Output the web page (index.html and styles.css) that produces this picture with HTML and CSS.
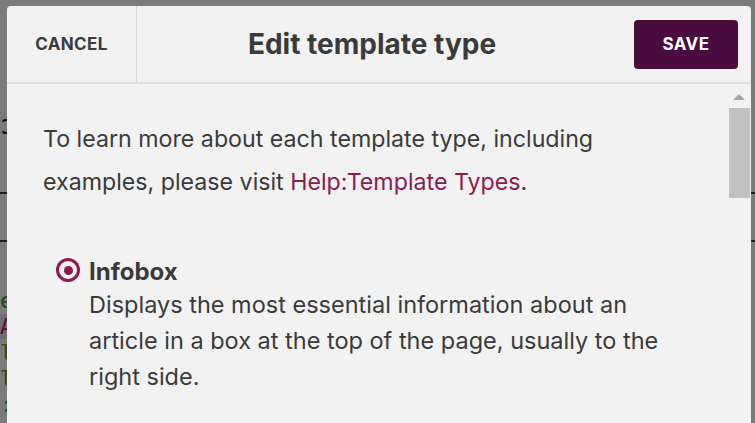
FILE: index.html
```html
<!DOCTYPE html>
<html lang="en">
<head>
  <meta charset="UTF-8">
  <meta name="viewport" content="width=device-width, initial-scale=1.0">
  <title>Edit template type</title>
  <link rel="stylesheet" href="styles.css">
</head>
<body>

  <!-- Page behind the dialog -->
  <div class="page">
    <div class="page-head">ɔ</div>
    <div class="page-rule"></div>
    <div class="page-rule"></div>
    <pre class="page-code"><span class="c-green">e:</span>
<span class="c-purple">AM</span>
<span class="c-olive">lt</span>
<span class="c-olive">le</span>
<span class="c-teal">: </span>
<span class="c-olive">nt</span></pre>
  </div>
  <div class="overlay"></div>

  <!-- Dialog -->
  <div class="modal">
    <div class="modal-header">
      <button class="btn-cancel">Cancel</button>
      <h1 class="modal-title">Edit template type</h1>
      <button class="btn-save">Save</button>
    </div>

    <div class="modal-body">
      <div class="modal-content">
        <p class="intro">To learn more about each template type, including examples, please visit <a href="#">Help:Template Types</a>.</p>

        <label class="option">
          <span class="radio checked"></span>
          <span class="option-text">
            <span class="option-name">Infobox</span>
            <span class="option-desc">Displays the most essential information about an article in a box at the top of the page, usually to the right side.</span>
          </span>
        </label>
      </div>

      <!-- Scrollbar -->
      <div class="scrollbar">
        <span class="scroll-up"></span>
        <span class="scroll-thumb"></span>
      </div>
    </div>
  </div>

</body>
</html>
```

FILE: styles.css
```css
body {
  margin: 0;
  font-family: Inter, "Noto Sans", sans-serif;
  background-color: #f4f4f4;
  overflow: hidden;
  height: 423px;
}
.page {
  padding-top: 110px;
  font-family: "DejaVu Sans Mono", monospace;
}
.page-head {
  font-size: 26px;
  color: #222;
  height: 82px;
}
.page-rule {
  border-top: 2px solid #444;
  height: 46px;
}
.page-code {
  margin: 0;
  font-size: 22px;
  line-height: 26px;
  font-family: "DejaVu Sans Mono", monospace;
}
.c-green { color: #2f8f2f; }
.c-purple { color: #b02060; background: #e8d8e8; }
.c-olive { color: #7a8a00; }
.c-teal { color: #2a8a9a; }
.overlay {
  position: fixed;
  top: 0;
  left: 0;
  width: 100%;
  height: 100%;
  background: rgba(0, 0, 0, 0.5);
}
.modal {
  position: fixed;
  top: 6px;
  left: 7px;
  right: 4px;
  bottom: -40px;
  background-color: #f2f2f2;
  border-radius: 4px 4px 0 0;
  display: flex;
  flex-direction: column;
  color: #3a3a3a;
}
.modal-header {
  display: flex;
  align-items: center;
  height: 76px;
  border-bottom: 2px solid #dcdcdc;
}
.btn-cancel {
  height: 100%;
  width: 130px;
  border: none;
  border-right: 1px solid #d6d6d6;
  background: none;
  font-family: inherit;
  font-size: 17px;
  font-weight: 700;
  letter-spacing: 0.4px;
  text-transform: uppercase;
  color: #3a3a3a;
}
.modal-title {
  flex: 1;
  margin: 0;
  padding-right: 27px;
  text-align: center;
  font-size: 28px;
  font-weight: 700;
  color: #3a3a3a;
}
.btn-save {
  width: 104px;
  height: 49px;
  margin-right: 13px;
  border: none;
  border-radius: 4px;
  background-color: #4a0c3f;
  color: #fff;
  font-family: inherit;
  font-size: 17px;
  font-weight: 700;
  letter-spacing: 0.4px;
  text-transform: uppercase;
}
.modal-body {
  flex: 1;
  display: flex;
}
.modal-content {
  flex: 1;
  padding: 34px 45px 0 36px;
}
.intro {
  margin: 0 0 53px;
  font-size: 23.2px;
  line-height: 43px;
}
.intro a {
  color: #8d1a52;
  text-decoration: none;
}
.option {
  display: flex;
  gap: 9px;
  padding-left: 13px;
}
.radio {
  flex: none;
  width: 24px;
  height: 24px;
  margin-top: 1px;
  box-sizing: border-box;
  border: 3px solid #8d1a52;
  border-radius: 50%;
  display: flex;
  align-items: center;
  justify-content: center;
}
.radio.checked::after {
  content: "";
  width: 9px;
  height: 9px;
  border-radius: 50%;
  background-color: #8d1a52;
}
.option-text {
  display: flex;
  flex-direction: column;
  font-size: 23.5px;
}
.option-name {
  font-weight: 700;
  font-size: 24px;
  line-height: 30px;
}
.option-desc {
  line-height: 36px;
}
.scrollbar {
  width: 24px;
  display: flex;
  flex-direction: column;
  align-items: center;
  padding-top: 10px;
}
.scroll-up {
  width: 0;
  height: 0;
  border-left: 6px solid transparent;
  border-right: 6px solid transparent;
  border-bottom: 6px solid #a3a3a3;
}
.scroll-thumb {
  width: 21px;
  height: 90px;
  margin-top: 8px;
  background-color: #c1c1c1;
}
```
